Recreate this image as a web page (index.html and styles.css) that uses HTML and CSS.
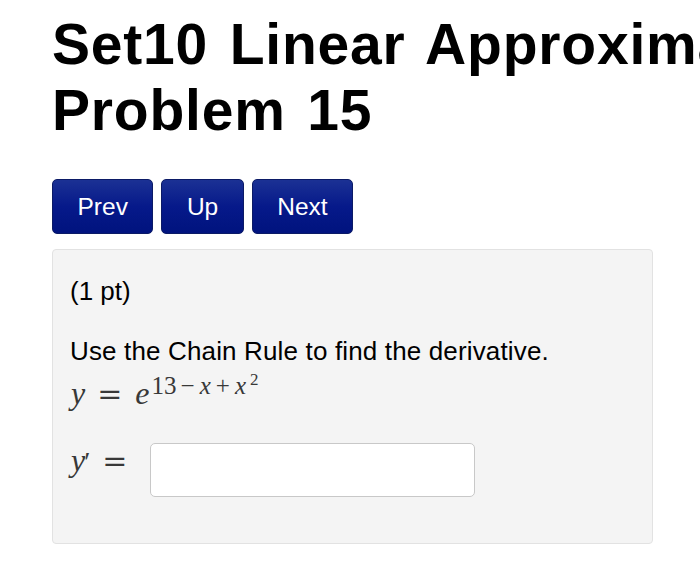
FILE: index.html
```html
<!DOCTYPE html>
<html lang="en">
  <head>
    <meta charset="UTF-8" />
    <meta name="viewport" content="width=device-width, initial-scale=1.0" />
    <title>Set10 Linear Approximation: Problem 15</title>
    <link rel="stylesheet" href="styles.css">
  </head>
  <body>
    <div class="page">
      <h1 class="title">
        <span class="title_line">Set10 Linear Approximation</span>
        <span class="title_line">Problem 15</span>
      </h1>

      <div class="nav">
        <a href="#" class="nav_btn">Prev</a>
        <a href="#" class="nav_btn">Up</a>
        <a href="#" class="nav_btn">Next</a>
      </div>

      <div class="problem">
        <p class="points">(1 pt)</p>
        <p class="question">Use the Chain Rule to find the derivative.</p>
        <div class="math formula">
          <i class="var">y</i><span class="eq">=</span><i class="base">e</i><sup class="exp"><span class="num">13</span><span class="op">&minus;</span><i>x</i><span class="op">+</span><i>x</i><sup class="sq">2</sup></sup>
        </div>
        <div class="answer">
          <span class="math answer_label"><i class="var">y</i><span class="prime">&prime;</span><span class="eq">=</span></span>
          <input type="text" class="answer_box" />
        </div>
      </div>
    </div>
  </body>
</html>
```

FILE: styles.css
```css
* {
  padding: 0;
  margin: 0;
  box-sizing: border-box;
}
body {
  background: #fff;
  font-family: "Liberation Sans", Arial, sans-serif;
  color: #000;
  overflow: hidden;
}
.page {
  padding: 0 0 0 52px;
  width: 700px;
  overflow: hidden;
}
.title {
  padding-top: 11px;
  font-size: 57px;
  line-height: 66px;
  font-weight: bold;
  letter-spacing: 0.8px;
  word-spacing: 5px;
  white-space: nowrap;
}
.title_line {
  display: block;
}
.nav {
  display: flex;
  gap: 8px;
  margin-top: 36px;
}
.nav_btn {
  display: inline-block;
  height: 55px;
  line-height: 53px;
  padding: 0 24.5px;
  color: #fff;
  font-size: 24.5px;
  text-decoration: none;
  background: linear-gradient(#1b3194, #06198a 50%, #00137e);
  border: 1px solid #0b1a66;
  border-radius: 5px;
}
.problem {
  width: 601px;
  height: 295px;
  margin-top: 15px;
  padding: 26px 17px 0;
  background: #f4f4f4;
  border: 1px solid #e2e2e2;
  border-radius: 4px;
}
.points,
.question {
  font-size: 26px;
  line-height: 30px;
}
.question {
  margin-top: 30px;
  letter-spacing: 0.15px;
}
.math {
  font-family: "Liberation Serif", "DejaVu Serif", serif;
  font-size: 32px;
  line-height: 40px;
  color: #383838;
}
.math i {
  font-style: italic;
}
.formula {
  margin-top: 7px;
}
.var {
  margin-left: 1px;
}
.eq {
  font-family: "DejaVu Serif", serif;
  font-size: 30px;
  margin: 0 13px 0 12px;
}
.exp {
  font-size: 25px;
  vertical-align: 10px;
  line-height: 0;
  margin-left: 2px;
}
.op {
  margin: 0 4px;
}
.exp i {
  margin: 0 1px;
}
.sq {
  font-size: 17px;
  vertical-align: 9px;
  line-height: 0;
  margin-left: 3px;
}
.prime {
  font-size: 28px;
  margin-left: -1px;
}
.answer {
  display: flex;
  align-items: flex-start;
  margin-top: 26px;
}
.answer_label {
  width: 80px;
  white-space: nowrap;
}
.answer_box {
  width: 325px;
  height: 54px;
  margin-top: 3px;
  background: #fff;
  border: 1px solid #c8c8c8;
  border-radius: 5px;
  outline: none;
}
```
